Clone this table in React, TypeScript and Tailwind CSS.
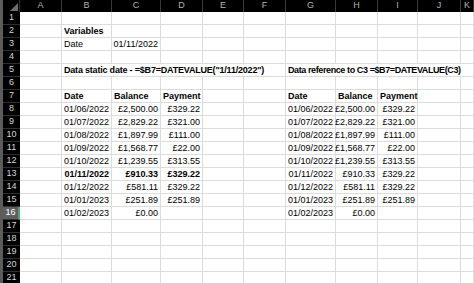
import React from 'react';

type Cell = {
  col: number; // 1 = A
  text: string;
  align?: 'left' | 'right';
  bold?: boolean;
  span?: number;
  tight?: string;
};

const COLS = ['A', 'B', 'C', 'D', 'E', 'F', 'G', 'H', 'I', 'J', 'K'];

const table = [
  ['01/06/2022', '£2,500.00', '£329.22'],
  ['01/07/2022', '£2,829.22', '£321.00'],
  ['01/08/2022', '£1,897.99', '£111.00'],
  ['01/09/2022', '£1,568.77', '£22.00'],
  ['01/10/2022', '£1,239.55', '£313.55'],
  ['01/11/2022', '£910.33', '£329.22'],
  ['01/12/2022', '£581.11', '£329.22'],
  ['01/01/2023', '£251.89', '£251.89'],
  ['01/02/2023', '£0.00', ''],
];

const buildRows = (): Cell[][] => {
  const rows: Cell[][] = Array.from({ length: 21 }, () => []);
  rows[1] = [{ col: 2, text: 'Variables', bold: true }];
  rows[2] = [
    { col: 2, text: 'Date' },
    { col: 3, text: '01/11/2022', align: 'right' },
  ];
  rows[4] = [
    {
      col: 2,
      text: 'Data static date - =$B7=DATEVALUE("1/11/2022")',
      bold: true,
      span: 5,
      tight: 'tracking-[-0.2px]',
    },
    {
      col: 7,
      text: 'Data reference to C3 =$B7=DATEVALUE(C3)',
      bold: true,
      span: 5,
      tight: 'tracking-[-0.4px]',
    },
  ];
  rows[6] = [
    { col: 2, text: 'Date', bold: true },
    { col: 3, text: 'Balance', bold: true },
    { col: 4, text: 'Payment', bold: true },
    { col: 7, text: 'Date', bold: true },
    { col: 8, text: 'Balance', bold: true },
    { col: 9, text: 'Payment', bold: true },
  ];
  table.forEach((r, i) => {
    const boldLeft = r[0] === '01/11/2022';
    rows[7 + i] = [
      { col: 2, text: r[0], align: 'right', bold: boldLeft },
      { col: 3, text: r[1], align: 'right', bold: boldLeft },
      { col: 4, text: r[2], align: 'right', bold: boldLeft },
      { col: 7, text: r[0], align: 'right' },
      { col: 8, text: r[1], align: 'right' },
      { col: 9, text: r[2], align: 'right' },
    ];
  });
  return rows;
};

const gridCols = 'grid-cols-[17px_42px_50px_49px_42px_41px_42px_50px_42px_40px_43px_1fr]';

export default function App() {
  const rows = buildRows();

  const renderRow = (cells: Cell[], r: number) => {
    const out: React.ReactNode[] = [];
    const selected = r === 16;
    out.push(
      <div
        key={`h${r}`}
        className={`flex items-center justify-center border-b border-[#2e2e2e] text-[9px] ${
          selected ? 'bg-[#5f5f5f] text-white border-r-2 border-r-[#4f9e7c]' : 'bg-black text-[#d6d6d6]'
        }`}
      >
        {r}
      </div>
    );
    let c = 1;
    while (c <= 11) {
      const cell = cells.find((x) => x.col === c);
      const span = cell?.span ?? 1;
      out.push(
        <div
          key={`${r}-${c}`}
          style={span > 1 ? { gridColumn: `span ${span} / span ${span}` } : undefined}
          className={`flex items-center whitespace-nowrap overflow-visible border-r border-b border-[#dcdcdc] px-[2px] pt-[1px] text-[9px] text-black ${
            cell?.align === 'right' ? 'justify-end' : 'justify-start'
          } ${cell?.bold ? 'font-bold' : ''} ${cell?.tight ?? ''}`}
        >
          {cell?.text ?? ''}
        </div>
      );
      c += span;
    }
    return out;
  };

  return (
    <div
      className="flex h-[283px] w-[474px] overflow-hidden bg-white"
      style={{ fontFamily: '"Liberation Sans", Arial, sans-serif' }}
    >
      <div className="w-[3px] shrink-0 bg-[#5c5c5c]" />
      <div className={`grid flex-1 ${gridCols} grid-rows-[12px] auto-rows-[13px]`}>
        <div className="relative bg-black border-r border-[#2e2e2e]">
          <svg className="absolute bottom-[1px] right-[1px]" width="8" height="8" viewBox="0 0 8 8">
            <polygon points="8,0 8,8 0,8" fill="#6e6e6e" />
          </svg>
        </div>
        {COLS.map((l) => (
          <div
            key={l}
            className="flex items-center justify-center border-r border-[#3a3a3a] bg-black text-[9px] text-[#b4b4b4]"
          >
            {l}
          </div>
        ))}
        {rows.map((cells, i) => renderRow(cells, i + 1))}
      </div>
    </div>
  );
}
